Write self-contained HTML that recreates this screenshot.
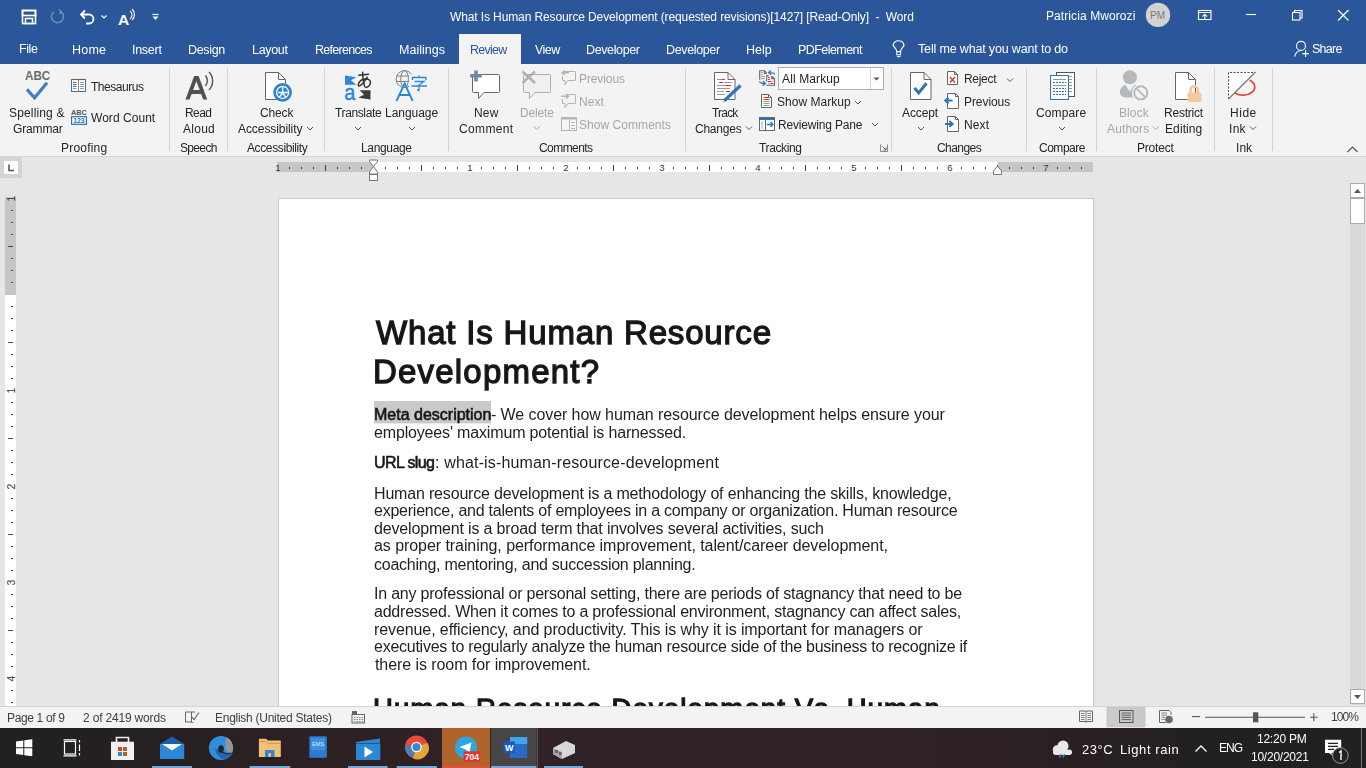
<!DOCTYPE html>
<html><head><meta charset="utf-8">
<style>
*{margin:0;padding:0;box-sizing:border-box}
html,body{width:1366px;height:768px;overflow:hidden;font-family:"Liberation Sans",sans-serif;background:#e6e6e6;position:relative}
.a{position:absolute}
.tx{position:absolute;z-index:4;will-change:transform;white-space:pre;font-family:"Liberation Sans",sans-serif}
svg{position:absolute;overflow:visible}
#title{left:0;top:0;width:1366px;height:64px;background:#2b579a}
#acttab{left:459px;top:34px;width:62px;height:30px;background:#f3f3f3}
#ribbon{left:0;top:64px;width:1366px;height:93px;background:#f3f3f3;border-bottom:1px solid #d5d5d5}
.sep{position:absolute;top:68px;width:1px;height:83px;background:#d2d2d2}
#doc{left:0;top:157px;width:1366px;height:550px;background:#e6e6e6;overflow:hidden}
#page{left:278px;top:198px;width:816px;height:600px;background:#fff;border:1px solid #c8c8c8}
#status{left:0;top:706px;width:1366px;height:22px;background:#f3f3f3;border-top:1px solid #d4d4d4}
#taskbar{left:0;top:728px;width:1366px;height:40px;background:linear-gradient(90deg,#222020 0px,#252021 150px,#2e2124 350px,#302226 600px,#302226 900px,#2a2022 1050px,#232021 1200px,#222020 1366px)}
</style></head><body>
<div id="title" class="a"></div>
<div id="acttab" class="a"></div>
<div id="ribbon" class="a"></div>
<div class="sep" style="left:169px"></div>
<div class="sep" style="left:227px"></div>
<div class="sep" style="left:324px"></div>
<div class="sep" style="left:448px"></div>
<div class="sep" style="left:685px"></div>
<div class="sep" style="left:891px"></div>
<div class="sep" style="left:1026px"></div>
<div class="sep" style="left:1096px"></div>
<div class="sep" style="left:1214px"></div>
<div class="sep" style="left:1272px"></div>
<div id="doc" class="a">
</div>
<div id="page" class="a"></div>
<svg style="left:0;top:0;z-index:2" width="1366" height="768" viewBox="0 0 1366 768"><rect x="0" y="157" width="22" height="21" fill="#d4d4d4"/><rect x="4" y="161" width="14" height="13" fill="#fff"/><path d="M9 164.5V170.5H14" fill="none" stroke="#555" stroke-width="1.6"/><rect x="277" y="162" width="816" height="10" fill="#fff"/><rect x="277" y="162" width="97" height="10" fill="#c6c6c6"/><rect x="998" y="162" width="95" height="10" fill="#c6c6c6"/><text x="278" y="171" font-family="Liberation Sans" font-size="9.5" fill="#333" text-anchor="middle">1</text><rect x="289" y="167" width="1" height="2" fill="#444"/><rect x="301" y="167" width="1" height="2" fill="#444"/><rect x="313" y="167" width="1" height="2" fill="#444"/><rect x="325" y="165" width="1" height="6" fill="#444"/><rect x="337" y="167" width="1" height="2" fill="#444"/><rect x="349" y="167" width="1" height="2" fill="#444"/><rect x="361" y="167" width="1" height="2" fill="#444"/><rect x="385" y="167" width="1" height="2" fill="#444"/><rect x="397" y="167" width="1" height="2" fill="#444"/><rect x="409" y="167" width="1" height="2" fill="#444"/><rect x="421" y="165" width="1" height="6" fill="#444"/><rect x="433" y="167" width="1" height="2" fill="#444"/><rect x="445" y="167" width="1" height="2" fill="#444"/><rect x="457" y="167" width="1" height="2" fill="#444"/><text x="470" y="171" font-family="Liberation Sans" font-size="9.5" fill="#333" text-anchor="middle">1</text><rect x="481" y="167" width="1" height="2" fill="#444"/><rect x="493" y="167" width="1" height="2" fill="#444"/><rect x="505" y="167" width="1" height="2" fill="#444"/><rect x="517" y="165" width="1" height="6" fill="#444"/><rect x="529" y="167" width="1" height="2" fill="#444"/><rect x="541" y="167" width="1" height="2" fill="#444"/><rect x="553" y="167" width="1" height="2" fill="#444"/><text x="566" y="171" font-family="Liberation Sans" font-size="9.5" fill="#333" text-anchor="middle">2</text><rect x="577" y="167" width="1" height="2" fill="#444"/><rect x="589" y="167" width="1" height="2" fill="#444"/><rect x="601" y="167" width="1" height="2" fill="#444"/><rect x="613" y="165" width="1" height="6" fill="#444"/><rect x="625" y="167" width="1" height="2" fill="#444"/><rect x="637" y="167" width="1" height="2" fill="#444"/><rect x="649" y="167" width="1" height="2" fill="#444"/><text x="662" y="171" font-family="Liberation Sans" font-size="9.5" fill="#333" text-anchor="middle">3</text><rect x="673" y="167" width="1" height="2" fill="#444"/><rect x="685" y="167" width="1" height="2" fill="#444"/><rect x="697" y="167" width="1" height="2" fill="#444"/><rect x="709" y="165" width="1" height="6" fill="#444"/><rect x="721" y="167" width="1" height="2" fill="#444"/><rect x="733" y="167" width="1" height="2" fill="#444"/><rect x="745" y="167" width="1" height="2" fill="#444"/><text x="758" y="171" font-family="Liberation Sans" font-size="9.5" fill="#333" text-anchor="middle">4</text><rect x="769" y="167" width="1" height="2" fill="#444"/><rect x="781" y="167" width="1" height="2" fill="#444"/><rect x="793" y="167" width="1" height="2" fill="#444"/><rect x="805" y="165" width="1" height="6" fill="#444"/><rect x="817" y="167" width="1" height="2" fill="#444"/><rect x="829" y="167" width="1" height="2" fill="#444"/><rect x="841" y="167" width="1" height="2" fill="#444"/><text x="854" y="171" font-family="Liberation Sans" font-size="9.5" fill="#333" text-anchor="middle">5</text><rect x="865" y="167" width="1" height="2" fill="#444"/><rect x="877" y="167" width="1" height="2" fill="#444"/><rect x="889" y="167" width="1" height="2" fill="#444"/><rect x="901" y="165" width="1" height="6" fill="#444"/><rect x="913" y="167" width="1" height="2" fill="#444"/><rect x="925" y="167" width="1" height="2" fill="#444"/><rect x="937" y="167" width="1" height="2" fill="#444"/><text x="950" y="171" font-family="Liberation Sans" font-size="9.5" fill="#333" text-anchor="middle">6</text><rect x="961" y="167" width="1" height="2" fill="#444"/><rect x="973" y="167" width="1" height="2" fill="#444"/><rect x="985" y="167" width="1" height="2" fill="#444"/><rect x="997" y="165" width="1" height="6" fill="#444"/><rect x="1009" y="167" width="1" height="2" fill="#444"/><rect x="1021" y="167" width="1" height="2" fill="#444"/><rect x="1033" y="167" width="1" height="2" fill="#444"/><text x="1046" y="171" font-family="Liberation Sans" font-size="9.5" fill="#333" text-anchor="middle">7</text><rect x="1057" y="167" width="1" height="2" fill="#444"/><rect x="1069" y="167" width="1" height="2" fill="#444"/><rect x="1081" y="167" width="1" height="2" fill="#444"/><path d="M369.5 160H377.5V161.5L373.5 166.5L369.5 161.5Z" fill="#fff" stroke="#777" stroke-width="1"/><path d="M373.5 166.5L377.5 172V174H369.5V172Z" fill="#fff" stroke="#777" stroke-width="1"/><rect x="369.5" y="174.5" width="8" height="6" fill="#fff" stroke="#777" stroke-width="1"/><path d="M997.5 166L1001.5 171V174.5H993.5V171Z" fill="#fff" stroke="#777" stroke-width="1"/><rect x="5" y="197" width="11" height="509" fill="#fff"/><rect x="5" y="197" width="11" height="98" fill="#c6c6c6"/><text x="0" y="0" font-family="Liberation Sans" font-size="10.5" fill="#333" text-anchor="middle" transform="translate(15 198.5) rotate(-90)">1</text><rect x="11" y="210" width="2" height="1" fill="#444"/><rect x="11" y="222" width="2" height="1" fill="#444"/><rect x="11" y="234" width="2" height="1" fill="#444"/><rect x="8" y="246" width="5" height="1" fill="#444"/><rect x="11" y="258" width="2" height="1" fill="#444"/><rect x="11" y="270" width="2" height="1" fill="#444"/><rect x="11" y="282" width="2" height="1" fill="#444"/><rect x="11" y="306" width="2" height="1" fill="#444"/><rect x="11" y="318" width="2" height="1" fill="#444"/><rect x="11" y="330" width="2" height="1" fill="#444"/><rect x="8" y="342" width="5" height="1" fill="#444"/><rect x="11" y="354" width="2" height="1" fill="#444"/><rect x="11" y="366" width="2" height="1" fill="#444"/><rect x="11" y="378" width="2" height="1" fill="#444"/><text x="0" y="0" font-family="Liberation Sans" font-size="10.5" fill="#333" text-anchor="middle" transform="translate(15 390.5) rotate(-90)">1</text><rect x="11" y="402" width="2" height="1" fill="#444"/><rect x="11" y="414" width="2" height="1" fill="#444"/><rect x="11" y="426" width="2" height="1" fill="#444"/><rect x="8" y="438" width="5" height="1" fill="#444"/><rect x="11" y="450" width="2" height="1" fill="#444"/><rect x="11" y="462" width="2" height="1" fill="#444"/><rect x="11" y="474" width="2" height="1" fill="#444"/><text x="0" y="0" font-family="Liberation Sans" font-size="10.5" fill="#333" text-anchor="middle" transform="translate(15 486.5) rotate(-90)">2</text><rect x="11" y="498" width="2" height="1" fill="#444"/><rect x="11" y="510" width="2" height="1" fill="#444"/><rect x="11" y="522" width="2" height="1" fill="#444"/><rect x="8" y="534" width="5" height="1" fill="#444"/><rect x="11" y="546" width="2" height="1" fill="#444"/><rect x="11" y="558" width="2" height="1" fill="#444"/><rect x="11" y="570" width="2" height="1" fill="#444"/><text x="0" y="0" font-family="Liberation Sans" font-size="10.5" fill="#333" text-anchor="middle" transform="translate(15 582.5) rotate(-90)">3</text><rect x="11" y="594" width="2" height="1" fill="#444"/><rect x="11" y="606" width="2" height="1" fill="#444"/><rect x="11" y="618" width="2" height="1" fill="#444"/><rect x="8" y="630" width="5" height="1" fill="#444"/><rect x="11" y="642" width="2" height="1" fill="#444"/><rect x="11" y="654" width="2" height="1" fill="#444"/><rect x="11" y="666" width="2" height="1" fill="#444"/><text x="0" y="0" font-family="Liberation Sans" font-size="10.5" fill="#333" text-anchor="middle" transform="translate(15 678.5) rotate(-90)">4</text><rect x="11" y="690" width="2" height="1" fill="#444"/><rect x="11" y="702" width="2" height="1" fill="#444"/><rect x="1350" y="183" width="15" height="522" fill="#d9d9d9"/><rect x="1350.5" y="183.5" width="14" height="14" fill="#fff" stroke="#acacac"/><path d="M1354 193H1361L1357.5 189Z" fill="#555"/><rect x="1350.5" y="198.5" width="14" height="25" fill="#fff" stroke="#acacac"/><rect x="1350.5" y="689.5" width="14" height="14" fill="#fff" stroke="#acacac"/><path d="M1354 695H1361L1357.5 699Z" fill="#555"/><rect x="374" y="401" width="117" height="22.4" fill="#c9c9c9"/><path d="M185.5 712V722H191.5L192.5 723L193.5 722" fill="none" stroke="#666" stroke-width="1"/><path d="M185.5 712H191.5V722M191.5 712H195" fill="none" stroke="#666" stroke-width="1"/><path d="M192 717L194 719.5L199 712.5" fill="none" stroke="#666" stroke-width="1.1"/><rect x="352" y="714.5" width="12.5" height="8.5" fill="none" stroke="#666" stroke-width="1"/><rect x="352" y="711" width="5" height="4" fill="#666"/><path d="M354 717.5H363M354 719.5H363M354 721.5H363" stroke="#888" stroke-dasharray="1.5 1"/><path d="M1079.5 711V721.5H1085.5L1086 722.5L1086.5 721.5H1092.5V711H1086.5L1086 712L1085.5 711Z" fill="none" stroke="#666" stroke-width="1"/><path d="M1086 712V721.5M1081 713.5H1084.5M1081 715.5H1084.5M1081 717.5H1084.5M1081 719.5H1084.5M1087.5 713.5H1091M1087.5 715.5H1091M1087.5 717.5H1091M1087.5 719.5H1091" stroke="#777" stroke-width="0.9"/><rect x="1106.5" y="706.7" width="39" height="20.6" fill="#c9c9c9"/><rect x="1119.5" y="710.5" width="13.5" height="12" fill="none" stroke="#555" stroke-width="1"/><path d="M1121.5 713H1131M1121.5 715.2H1131M1121.5 717.4H1131M1121.5 719.6H1131" stroke="#555" stroke-width="0.9"/><path d="M1166 722.5H1159.5V710.5H1169L1171 712.5V715" fill="none" stroke="#666" stroke-width="1"/><path d="M1161.5 713H1167M1161.5 715.2H1167M1161.5 717.4H1165M1161.5 719.6H1165" stroke="#777" stroke-width="0.9"/><circle cx="1169" cy="719.5" r="3.8" fill="#6a6a6a"/><path d="M1192 716.6H1200" stroke="#555" stroke-width="1.1"/><path d="M1205 717.3H1305" stroke="#555" stroke-width="1.1"/><rect x="1253" y="712.3" width="5.3" height="10" fill="#555"/><path d="M1310 717.3H1317.6M1313.8 713.3V721.3" stroke="#555" stroke-width="1.1"/><rect x="442" y="728" width="48" height="40" fill="#b0632b"/><rect x="491" y="728" width="45.5" height="40" fill="#484546"/><rect x="537" y="728" width="1" height="40" fill="#5a5a5a"/><rect x="152" y="766" width="40" height="2" fill="#7aa5d8"/><rect x="249.6" y="766" width="40.70000000000002" height="2" fill="#7aa5d8"/><rect x="348" y="766" width="39.60000000000002" height="2" fill="#7aa5d8"/><rect x="396.7" y="766" width="40.30000000000001" height="2" fill="#7aa5d8"/><rect x="442" y="766" width="47.69999999999999" height="2" fill="#e0503a"/><rect x="491" y="766" width="45.39999999999998" height="2" fill="#7aa5d8"/><rect x="544" y="766" width="39" height="2" fill="#7aa5d8"/><path d="M16 741.5L23.3 740.5V747.3H16ZM24.3 740.3L32.3 739.3V747.3H24.3ZM16 748.3H23.3V755.1L16 754.1ZM24.3 748.3H32.3V756.3L24.3 755.2Z" fill="#fff"/><rect x="64.5" y="741.5" width="11" height="12.5" fill="none" stroke="#fff" stroke-width="1.2"/><path d="M63.5 739.8H76.5M63.5 755.8H76.5M79.5 740V742.5M79.5 744.5V751M79.5 753V755.5" stroke="#fff" stroke-width="1.2"/><path d="M116.5 742V737.5H128.5V742" fill="none" stroke="#f0f0f0" stroke-width="1.6"/><rect x="111" y="741.7" width="23" height="18.3" fill="#f0f0f0"/><rect x="118" y="747" width="4" height="4" fill="#e23a2a"/><rect x="123" y="747" width="4" height="4" fill="#b06020"/><rect x="118" y="752" width="4" height="4" fill="#2b88d8"/><rect x="123" y="752" width="4" height="4" fill="#b06020"/><path d="M160 744L172 736.6L184.2 744Z" fill="#1c5fad"/><rect x="160" y="744" width="24.2" height="15" fill="#2b88d8"/><path d="M162 744H182L172 750.5Z" fill="#f5f5f5"/><circle cx="221" cy="748" r="12.1" fill="#2f8fdc"/><path d="M226.5 737.2A12.1 12.1 0 0 1 231.8 753.2Q226.5 752.5 225.2 748Q224.8 742 226.5 737.2Z" fill="#8f969c"/><path d="M215 748.5Q216 757 223.5 759Q229.5 759.5 231.8 753.5Q226 755.5 222 752.5Q218.5 749 215 748.5Z" fill="#2a62b0"/><ellipse cx="221" cy="749" rx="2.8" ry="3.8" fill="#242021"/><path d="M222.5 752.3Q226.5 754.8 231.5 753" fill="none" stroke="#242021" stroke-width="1.2"/><path d="M258.9 741.5V738.8H266L268 740.5H280.8V757H258.9Z" fill="#f2c07a"/><path d="M258.9 741.5H266L268 743.5H280.8" fill="none" stroke="#d39a4a" stroke-width="1"/><path d="M265 757V750H274.5V757H271V753H268.5V757Z" fill="#2b88d8"/><rect x="309.3" y="736.2" width="17.5" height="21.6" rx="1" fill="#2b7bd0"/><rect x="311" y="738" width="14" height="12" fill="#3d8fe0"/><text x="318" y="746" font-family="Liberation Sans" font-size="5.5" fill="#dfe9f5" text-anchor="middle">EMS</text><path d="M356 742L380 738.5V743H356Z" fill="#2b88d8"/><rect x="356" y="743.5" width="24.3" height="16.5" fill="#2b88d8"/><path d="M364.5 746.5V757.5L373 752Z" fill="#fff"/><circle cx="416.5" cy="747" r="11.5" fill="#e8493a"/><path d="M416.5 747L405.3 744.5A11.5 11.5 0 0 0 413 758Z" fill="#4f7fb0"/><path d="M416.5 747L413 758.5A11.5 11.5 0 0 0 427.8 743Z" fill="#e5a33a"/><circle cx="416.5" cy="747" r="5.3" fill="#fff"/><circle cx="416.5" cy="747" r="4" fill="#3a86d8"/><circle cx="466" cy="747.6" r="11" fill="#2ea6df"/><path d="M459.5 747L471.5 742.5L469.5 752.5L465.5 749.5Z" fill="#fff"/><rect x="463.6" y="751.4" width="16.6" height="10.5" fill="#e8322e"/><text x="471.9" y="760.3" font-family="Liberation Sans" font-weight="bold" font-size="8.5" fill="#fff" text-anchor="middle" textLength="14.5" lengthAdjust="spacingAndGlyphs">704</text><rect x="510" y="737" width="17.2" height="21" fill="#2a6ac9"/><rect x="510" y="737" width="17.2" height="7" fill="#41a5ee"/><rect x="503.4" y="741.5" width="11.5" height="11.5" fill="#185abd"/><text x="509.2" y="751" font-family="Liberation Sans" font-weight="bold" font-size="9" fill="#fff" text-anchor="middle">W</text><path d="M553 748L566 741L575 745V753L562 759L553 754Z" fill="#d8d8d8"/><path d="M553 748L562 752V759L553 754Z" fill="#a8a8a8"/><rect x="555" y="750" width="3" height="3" fill="#666"/><rect x="559" y="752" width="2.5" height="3" fill="#666"/><circle cx="1063" cy="746" r="5.5" fill="#e8e8e8"/><circle cx="1057" cy="749.5" r="4.2" fill="#e8e8e8"/><rect x="1053" y="749.5" width="19" height="5.5" rx="2.7" fill="#e8e8e8"/><path d="M1061 754L1059.5 757.5M1064.5 754L1063 757.5" stroke="#3a8ee0" stroke-width="1.4"/><path d="M1195.5 751.5L1201 746L1206.5 751.5" fill="none" stroke="#fff" stroke-width="1.3"/><path d="M1325 739.7H1341.2V753H1331L1334 756.5L1329 753H1325Z" fill="#fff"/><path d="M1328 743.4H1338M1328 746.4H1338M1328 749.4H1334" stroke="#222" stroke-width="1.1"/><circle cx="1340.4" cy="755.5" r="7.8" fill="#262223" stroke="#999" stroke-width="1"/><path d="M1339 752.5L1341 751V760" fill="none" stroke="#fff" stroke-width="1.4"/><rect x="1361" y="728" width="1" height="40" fill="#777"/></svg>
<div id="status" class="a"></div>
<div id="taskbar" class="a"></div>
<svg style="left:0;top:0;z-index:3" width="1366" height="768" viewBox="0 0 1366 768"><rect x="22.5" y="10.5" width="13" height="13" fill="none" stroke="#fff" stroke-width="1.6"/><rect x="22.5" y="10.5" width="13" height="5" fill="none" stroke="#fff" stroke-width="1.6"/><rect x="25.5" y="18.5" width="7" height="5" fill="none" stroke="#fff" stroke-width="1.5"/><path d="M60.5 11.5A6 6 0 1 1 54 11.8" fill="none" stroke="#7fa0c0" stroke-width="1.6" opacity="0.75"/><path d="M59 9.5L61.5 11.5L59.5 14" fill="none" stroke="#7fa0c0" stroke-width="1.4" opacity="0.75"/><path d="M81.5 14.5H89A4.5 4.5 0 0 1 89 23.5H86" fill="none" stroke="#fff" stroke-width="1.8"/><path d="M85 10.5L81 14.5L85 18.5" fill="none" stroke="#fff" stroke-width="1.8"/><path d="M101.5 15.5L104 18L106.5 15.5" fill="none" stroke="#fff" stroke-width="1.1"/><text x="118" y="24.8" font-family="Liberation Sans" font-weight="bold" font-size="15.5" fill="#fff">A</text><path d="M130 11A5 5 0 0 1 130 19" fill="none" stroke="#fff" stroke-width="1.1"/><path d="M132.2 9A8 8 0 0 1 132.2 20" fill="none" stroke="#fff" stroke-width="1.1"/><path d="M152.5 14.5H158.5" stroke="#fff" stroke-width="1.2"/><path d="M152.5 16.5H158.5L155.5 20Z" fill="#fff"/><circle cx="1158" cy="14.9" r="12.2" fill="#d2d2d2"/><text x="1150" y="18.6" font-family="Liberation Sans" font-size="10.5" fill="#7a7a7a" textLength="15" lengthAdjust="spacingAndGlyphs">PM</text><rect x="1198.5" y="10.5" width="12.5" height="9" fill="none" stroke="#fff" stroke-width="1.1"/><path d="M1198.5 12.5H1211" stroke="#fff" stroke-width="1"/><path d="M1204.75 19V14.5M1202.5 16.5L1204.75 14.2L1207 16.5" fill="none" stroke="#fff" stroke-width="1.1"/><path d="M1246 14.5H1256" stroke="#fff" stroke-width="1.1"/><rect x="1292.5" y="12.5" width="7.5" height="7.5" fill="none" stroke="#fff" stroke-width="1.1"/><path d="M1294.5 12.5V10.5H1302V18H1300" fill="none" stroke="#fff" stroke-width="1.1"/><path d="M1338 10L1348.5 20.5M1348.5 10L1338 20.5" stroke="#fff" stroke-width="1.2"/><path d="M896.8 51.5C896.5 48.5 893.2 46.5 893.2 45.2A5.5 5.5 0 0 1 904 45.2C904 46.5 900.8 48.5 900.5 51.5Z" fill="none" stroke="#fff" stroke-width="1.2"/><rect x="896.8" y="51.8" width="3.8" height="3" fill="none" stroke="#fff" stroke-width="1"/><path d="M897 56.6H900.5" stroke="#fff" stroke-width="1.1"/><circle cx="1301" cy="45.9" r="4.5" fill="none" stroke="#fff" stroke-width="1.1"/><path d="M1294.6 56.6C1295.5 52.5 1298 50.8 1300.5 50.5" fill="none" stroke="#fff" stroke-width="1.1"/><path d="M1305.6 50.2V57M1302.2 53.6H1309" stroke="#fff" stroke-width="1.1"/><text x="25" y="79.8" font-family="Liberation Sans" font-weight="bold" font-size="12.3" fill="#6b6b6b" textLength="25.2" lengthAdjust="spacingAndGlyphs">ABC</text><path d="M28 90.5L34.6 97.8L46 84" fill="none" stroke="#3d80c4" stroke-width="3.2" stroke-linecap="square"/><rect x="71.5" y="79.5" width="14" height="12" fill="#fff" stroke="#3a74b0" stroke-width="1"/><path d="M71.5 79.5H85.5" stroke="#666" stroke-width="1.2"/><path d="M78.5 79.5V91.5" stroke="#888" stroke-width="1"/><path d="M73 82.5H76.5" stroke="#e03c2c"/><path d="M73 84.5H76.5M73 86.5H76.5" stroke="#3a74b0"/><path d="M73 88.5H76.5M80 82.5H84M80 84.5H84M80 86.5H84M80 88.5H84" stroke="#999"/><text x="71" y="114.9" font-family="Liberation Sans" font-weight="bold" font-size="8" fill="#555" textLength="15.8" lengthAdjust="spacingAndGlyphs">ABC</text><rect x="71.6" y="116.7" width="14.8" height="7.6" fill="#fff" stroke="#2f6fb0" stroke-width="1.2"/><text x="73.2" y="123" font-family="Liberation Sans" font-weight="bold" font-size="7" fill="#2f6fb0" textLength="11.5" lengthAdjust="spacingAndGlyphs">123</text><path d="M185.5 99.6L194.2 76H198.6L207.2 99.6H203.2L201.2 94.1H191.6L189.5 99.6ZM196.4 81.3L193.1 90.1H199.7Z" fill="#505050" fill-rule="evenodd"/><path d="M205.5 75.5A9 9 0 0 1 205.5 86" fill="none" stroke="#555" stroke-width="1.4"/><path d="M209 72A13 13 0 0 1 209 90" fill="none" stroke="#555" stroke-width="1.4"/><path d="M265.5 72.5H278.5L285.5 79.5V99.5H265.5Z" fill="#fff" stroke="#666" stroke-width="1"/><path d="M278.5 72.5V79.5H285.5" fill="none" stroke="#666" stroke-width="1"/><circle cx="282.6" cy="92.4" r="9.3" fill="#2f80d0"/><g stroke="#fff" stroke-width="1.3" fill="none"><circle cx="282.6" cy="92.4" r="6"/><path d="M282.6 86.5V93M278 92.5H288M282.6 93L279 97.5M282.6 93L286 97.5"/></g><path d="M345 75.4L356.2 77.2L351 80.2L356.2 84.8H345Z" fill="#2b88d8"/><text x="344.2" y="99.6" font-family="Liberation Sans" font-size="22.5" fill="#2b88d8" stroke="#2b88d8" stroke-width="0.5" textLength="11" lengthAdjust="spacingAndGlyphs">a</text><g fill="none" stroke="#333" stroke-width="1.5" stroke-linecap="round"><path d="M358.8 75.3L368.5 74.3"/><path d="M362.6 72.3Q362.6 80 364.6 86.5"/><path d="M367.2 77.2Q363.5 83.5 360.2 85.6Q357.6 87 358.6 83.4Q360.6 79 365.6 79Q370.8 79 370.4 83Q370 86.6 365.8 87.4"/></g><path d="M370.5 99.6L358.5 97.8L364 94.5L359.5 90.2H370.5Z" fill="#3a3d3a"/><g fill="none" stroke="#808080" stroke-width="1"><circle cx="404.6" cy="79.1" r="8.5"/><ellipse cx="404.6" cy="79.1" rx="3.8" ry="8.5"/><path d="M396.5 76H412.5M396.5 81.5H412.5"/></g><rect x="409" y="74" width="19" height="18" fill="#f3f3f3"/><path d="M396.5 101L404.6 83.5L412.7 101M399.3 95H410" fill="none" stroke="#2b88d8" stroke-width="1.9"/><g fill="none" stroke="#2b88d8" stroke-width="1.3"><path d="M419 75.5V77.5M412.5 80V77.5H426V80M414.5 81.5H424L419 85V90.5L417 90M411.5 86H427"/></g><path d="M473.5 74.5H498.5Q499.5 74.5 499.5 75.5V91.5Q499.5 92.5 498.5 92.5H484L478.5 98.5V92.5H473.5Q472.5 92.5 472.5 91.5V75.5Q472.5 74.5 473.5 74.5Z" fill="#fff" stroke="#666" stroke-width="1"/><path d="M476 70.5V81.5M470.2 75.8H481.8" stroke="#6f87a3" stroke-width="3.6"/><path d="M524.5 74.5H549.5Q550.5 74.5 550.5 75.5V91.5Q550.5 92.5 549.5 92.5H535L529.5 98.5V92.5H524.5Q523.5 92.5 523.5 91.5V75.5Q523.5 74.5 524.5 74.5Z" fill="#f0f0f0" stroke="#adadad" stroke-width="1"/><path d="M522.5 71.5L535 83M522.5 83L535 71.5" stroke="#b0b0b0" stroke-width="2.4"/><path d="M563.5 71.5H575Q575.5 71.5 575.5 72V80Q575.5 80.5 575 80.5H568L565 84.5V80.5H563Q562.5 80.5 562.5 80V76" fill="#f3f3f3" stroke="#b4b4b4" stroke-width="1"/><path d="M569 72.8H562M564.5 70.5L562 72.8L564.5 75" fill="none" stroke="#b4b4b4" stroke-width="1.4"/><path d="M565.5 94.5H575Q575.5 94.5 575.5 95V103Q575.5 103.5 575 103.5H568L565 107.5V103.5H563Q562.5 103.5 562.5 103V99" fill="#f3f3f3" stroke="#b4b4b4" stroke-width="1"/><path d="M561.5 96.3H568.5M566 94L568.5 96.3L566 98.6" fill="none" stroke="#b4b4b4" stroke-width="1.4"/><rect x="561.5" y="117.5" width="15" height="13" fill="#f6f6f6" stroke="#b4b4b4" stroke-width="1"/><rect x="561.5" y="117.5" width="15" height="2" fill="#b4b4b4"/><path d="M569.5 120V130.5M571 122.5H575M571 125.5H575M571 128.5H575" stroke="#b4b4b4" stroke-width="1"/><path d="M714.5 72.5H728L735 79.5V99.5H714.5Z" fill="#fff" stroke="#666" stroke-width="1"/><path d="M728 72.5V79.5H735" fill="none" stroke="#666" stroke-width="1"/><g stroke-width="1"><path d="M717 79.5H722M717 85.5H726M717 88.5H730M717 91.5H724M717 94.5H725M724 82.5H732" stroke="#999"/><path d="M722 79.5H725M719 82.5H723M726 85.5H731M726 91.5H730" stroke="#e03020"/></g><path d="M724.5 100.5L740.5 85.5" stroke="#2e75b6" stroke-width="3.2"/><path d="M723 102L725.5 98.5L727 100.5Z" fill="#2e75b6"/><path d="M759.7 79.7V70.7H764.5L766.2 72.5V73.8" fill="none" stroke="#666" stroke-width="1.1"/><path d="M764.5 70.7V73.5H766.5" fill="none" stroke="#666" stroke-width="1.1"/><path d="M761 72.6H763M761 74.6H763M761 76.6H765M761 78.6H765" stroke="#999" stroke-width="0.9"/><path d="M766.7 81.6V75.6H768.6M766.4 85.3H774.5V78.8L772 76.3H771.8V78.8H774.5" fill="none" stroke="#666" stroke-width="1.1"/><path d="M768 77.3H770M768 79.4H770M768 81.5H771M771 83.5H773" stroke="#e03020" stroke-width="1"/><path d="M771 81.5H773M768 83.5H771" stroke="#aaa" stroke-width="0.9"/><path d="M774.6 74.5Q774 72.6 769 72.6M771 70.5L768.6 72.6L771 74.8" fill="none" stroke="#2e7dc6" stroke-width="1.4"/><path d="M759.7 81.2Q759.8 83.5 765 83.5M762.8 81.3L765.3 83.5L762.8 85.7" fill="none" stroke="#2e7dc6" stroke-width="1.4"/><rect x="778.5" y="67.5" width="105" height="22" fill="#fff" stroke="#adadad" stroke-width="1"/><path d="M870.5 68V89" stroke="#d8d8d8"/><path d="M873.5 77.5H879.5L876.5 80.5Z" fill="#555"/><path d="M761.5 94.5H768.5L771.5 97.5V107.5H761.5Z" fill="#fff" stroke="#666" stroke-width="1"/><path d="M768.5 94.5V97.5H771.5" fill="none" stroke="#666" stroke-width="1"/><path d="M763.5 97.5H768M763.5 99.5H769.5" stroke="#e03020"/><path d="M763.5 101.5H769.5M763.5 103.5H769.5M763.5 105.5H769.5" stroke="#999"/><path d="M855 101L858 104L861 101" fill="none" stroke="#555" stroke-width="1"/><rect x="759.5" y="117.5" width="15" height="13" fill="#fff" stroke="#666" stroke-width="1"/><rect x="759.5" y="117.5" width="15" height="2.5" fill="#2e75b6"/><path d="M765.5 120V130.5" stroke="#666"/><path d="M762 121.5V129" stroke="#aaa"/><path d="M767 124.5H773M770.5 122L773 124.5L770.5 127" fill="none" stroke="#2e75b6" stroke-width="1.3"/><path d="M872 123L875 126L878 123" fill="none" stroke="#555" stroke-width="1"/><path d="M880.5 144.5V151.5H887.5V144.5" fill="none" stroke="#888" stroke-width="1"/><path d="M882.5 146.5L886 150M886 147.5V150H883.5" fill="none" stroke="#666" stroke-width="1"/><path d="M910.5 72.5H924L931 79.5V99.5H910.5Z" fill="#fff" stroke="#666" stroke-width="1"/><path d="M924 72.5V79.5H931" fill="none" stroke="#666" stroke-width="1"/><path d="M914.5 88L918.7 93L926.5 83.2" fill="none" stroke="#2e75b6" stroke-width="3"/><path d="M947.5 71.5H954.5L957.5 74.5V84.5H947.5Z" fill="#fff" stroke="#666" stroke-width="1"/><path d="M954.5 71.5V74.5H957.5" fill="none" stroke="#666" stroke-width="1"/><path d="M950 77L955 82.5M955 77L950 82.5" stroke="#e03020" stroke-width="1.3"/><path d="M1007 78.5L1010 81.5L1013 78.5" fill="none" stroke="#555" stroke-width="1"/><path d="M947.5 93.5H955.5L958.5 96.5V108.5H947.5Z" fill="#fff" stroke="#666" stroke-width="1"/><path d="M955.5 93.5V96.5H958.5" fill="none" stroke="#666" stroke-width="1"/><path d="M945.5 100.6H952.5M948.5 97.8L945.3 100.6L948.5 103.4" fill="none" stroke="#2e75b6" stroke-width="2"/><path d="M947.5 116.5H955.5L958.5 119.5V131.5H947.5Z" fill="#fff" stroke="#666" stroke-width="1"/><path d="M955.5 116.5V119.5H958.5" fill="none" stroke="#666" stroke-width="1"/><path d="M945 123.9H952.5M949.3 121L952.7 123.9L949.3 126.8" fill="none" stroke="#2e75b6" stroke-width="2"/><rect x="1056.5" y="72.5" width="18" height="24" fill="#fff" stroke="#555" stroke-width="1"/><path d="M1069 76.5H1072M1069 79.5H1072M1069 82.5H1072M1069 85.5H1072M1069 88.5H1072M1069 91.5H1072" stroke="#999"/><rect x="1050.5" y="75.5" width="18" height="24" fill="#fff" stroke="#2e75b6" stroke-width="1"/><path d="M1053 79.5H1066M1053 85.5H1066" stroke="#999"/><path d="M1053 82.5H1066M1053 88.5H1066M1053 91.5H1066M1053 94.5H1066" stroke="#2e75b6" stroke-dasharray="2 1"/><circle cx="1129.9" cy="77.2" r="7" fill="#b6b9bc"/><path d="M1120 93.5Q1119 87.5 1125.2 84.6L1129.8 91.8L1134.4 84.6Q1137 85 1138 86.5V97.6H1125.5Q1121 97.2 1120 93.5Z" fill="#b6b9bc"/><circle cx="1140.8" cy="92.8" r="9" fill="#f3f3f3"/><circle cx="1140.8" cy="92.8" r="6.6" fill="#f3f3f3" stroke="#b6b9bc" stroke-width="1.9"/><path d="M1136.2 88.2L1145.4 97.4" stroke="#b6b9bc" stroke-width="1.9"/><path d="M1175.5 72.5H1188.5L1195.5 79.5V99.5H1175.5Z" fill="#fff" stroke="#666" stroke-width="1"/><path d="M1188.5 72.5V79.5H1195.5" fill="none" stroke="#666" stroke-width="1"/><path d="M1190.5 93V90A3.7 3.7 0 0 1 1197.9 90V93" fill="none" stroke="#f5c9a0" stroke-width="2.5"/><rect x="1187.5" y="92.5" width="14" height="9.5" rx="1.5" fill="#f5c9a0"/><path d="M1228.5 99V72.5H1255" fill="none" stroke="#555" stroke-width="1" stroke-dasharray="2 1.5"/><path d="M1228.5 72.5L1255 72.5L1228.5 99Z" fill="#fff"/><path d="M1228.5 99V72.5H1255" fill="none" stroke="#555" stroke-width="1" stroke-dasharray="2 1.5"/><path d="M1249.7 80.2A11.6 8.2 0 1 1 1235 92.8" fill="none" stroke="#e03c2c" stroke-width="1.6"/><path d="M1228.5 99L1255.5 72" stroke="#777" stroke-width="1.2"/><path d="M307 127.0L310 130.0L313 127.0" fill="none" stroke="#555" stroke-width="1"/><path d="M355 127.0L358 130.0L361 127.0" fill="none" stroke="#555" stroke-width="1"/><path d="M409 127.0L412 130.0L415 127.0" fill="none" stroke="#555" stroke-width="1"/><path d="M533.8 126.5L536.8 129.5L539.8 126.5" fill="none" stroke="#a6a6a6" stroke-width="1"/><path d="M746 126.5L749 129.5L752 126.5" fill="none" stroke="#555" stroke-width="1"/><path d="M918 127.0L921 130.0L924 127.0" fill="none" stroke="#555" stroke-width="1"/><path d="M1059 127.0L1062 130.0L1065 127.0" fill="none" stroke="#555" stroke-width="1"/><path d="M1152.7 126.5L1155.7 129.5L1158.7 126.5" fill="none" stroke="#a6a6a6" stroke-width="1"/><path d="M1250 126.5L1253 129.5L1256 126.5" fill="none" stroke="#555" stroke-width="1"/><path d="M1347.5 152L1352.5 147L1357.5 152" fill="none" stroke="#555" stroke-width="1.1"/></svg>
<div class="tx" style="left:450.30px;top:11.00px;font-size:12px;line-height:12px;letter-spacing:-0.116px;color:#ffffff;">What Is Human Resource Development (requested revisions)[1427] [Read-Only]  -  Word</div>
<div class="tx" style="left:1046.20px;top:10.00px;font-size:12px;line-height:12px;letter-spacing:0.087px;color:#ffffff;">Patricia Mworozi</div>
<div class="tx" style="left:19.20px;top:43.00px;font-size:12.5px;line-height:12.5px;letter-spacing:-0.400px;color:#ffffff;">File</div>
<div class="tx" style="left:72.40px;top:44.00px;font-size:12.5px;line-height:12.5px;letter-spacing:0.200px;color:#ffffff;">Home</div>
<div class="tx" style="left:132.00px;top:44.00px;font-size:12.5px;line-height:12.5px;letter-spacing:-0.280px;color:#ffffff;">Insert</div>
<div class="tx" style="left:188.20px;top:44.00px;font-size:12.5px;line-height:12.5px;letter-spacing:-0.320px;color:#ffffff;">Design</div>
<div class="tx" style="left:251.50px;top:44.00px;font-size:12.5px;line-height:12.5px;letter-spacing:-0.320px;color:#ffffff;">Layout</div>
<div class="tx" style="left:314.50px;top:44.00px;font-size:12.5px;line-height:12.5px;letter-spacing:-0.722px;color:#ffffff;">References</div>
<div class="tx" style="left:398.70px;top:44.00px;font-size:12.5px;line-height:12.5px;letter-spacing:0.014px;color:#ffffff;">Mailings</div>
<div class="tx" style="left:534.90px;top:44.00px;font-size:12.5px;line-height:12.5px;letter-spacing:-0.533px;color:#ffffff;">View</div>
<div class="tx" style="left:586.00px;top:44.00px;font-size:12.5px;line-height:12.5px;letter-spacing:-0.375px;color:#ffffff;">Developer</div>
<div class="tx" style="left:665.50px;top:44.00px;font-size:12.5px;line-height:12.5px;letter-spacing:-0.362px;color:#ffffff;">Developer</div>
<div class="tx" style="left:746.00px;top:44.00px;font-size:12.5px;line-height:12.5px;letter-spacing:0.000px;color:#ffffff;">Help</div>
<div class="tx" style="left:798.00px;top:44.00px;font-size:12.5px;line-height:12.5px;letter-spacing:-0.556px;color:#ffffff;">PDFelement</div>
<div class="tx" style="left:918.00px;top:43.00px;font-size:12.5px;line-height:12.5px;letter-spacing:-0.162px;color:#ffffff;">Tell me what you want to do</div>
<div class="tx" style="left:470.40px;top:44.00px;font-size:12.5px;line-height:12.5px;letter-spacing:-0.760px;color:#2b579a;">Review</div>
<div class="tx" style="left:1312.00px;top:43.00px;font-size:12.5px;line-height:12.5px;letter-spacing:-0.750px;color:#ffffff;">Share</div>
<div class="tx" style="left:90.60px;top:81.00px;font-size:12px;line-height:12px;letter-spacing:-0.462px;color:#262626;">Thesaurus</div>
<div class="tx" style="left:90.60px;top:112.00px;font-size:12px;line-height:12px;letter-spacing:0.044px;color:#262626;">Word Count</div>
<div class="tx" style="left:9.30px;top:107.00px;font-size:12px;line-height:12px;letter-spacing:0.156px;color:#262626;">Spelling &amp;</div>
<div class="tx" style="left:12.70px;top:123.00px;font-size:12px;line-height:12px;letter-spacing:-0.150px;color:#262626;">Grammar</div>
<div class="tx" style="left:61.00px;top:142.00px;font-size:12px;line-height:12px;letter-spacing:0.200px;color:#262626;">Proofing</div>
<div class="tx" style="left:185.40px;top:107.00px;font-size:12px;line-height:12px;letter-spacing:-0.567px;color:#262626;">Read</div>
<div class="tx" style="left:183.40px;top:123.00px;font-size:12px;line-height:12px;letter-spacing:0.275px;color:#262626;">Aloud</div>
<div class="tx" style="left:179.60px;top:142.00px;font-size:12px;line-height:12px;letter-spacing:-0.660px;color:#262626;">Speech</div>
<div class="tx" style="left:259.60px;top:107.00px;font-size:12px;line-height:12px;letter-spacing:-0.150px;color:#262626;">Check</div>
<div class="tx" style="left:238.40px;top:123.00px;font-size:12px;line-height:12px;letter-spacing:-0.075px;color:#262626;">Accessibility</div>
<div class="tx" style="left:246.50px;top:142.00px;font-size:12px;line-height:12px;letter-spacing:-0.383px;color:#262626;">Accessibility</div>
<div class="tx" style="left:335.00px;top:107.00px;font-size:12px;line-height:12px;letter-spacing:-0.375px;color:#262626;">Translate</div>
<div class="tx" style="left:385.30px;top:107.00px;font-size:12px;line-height:12px;letter-spacing:-0.043px;color:#262626;">Language</div>
<div class="tx" style="left:360.80px;top:142.00px;font-size:12px;line-height:12px;letter-spacing:-0.343px;color:#262626;">Language</div>
<div class="tx" style="left:473.60px;top:107.00px;font-size:12px;line-height:12px;letter-spacing:0.150px;color:#262626;">New</div>
<div class="tx" style="left:458.70px;top:123.00px;font-size:12px;line-height:12px;letter-spacing:0.350px;color:#262626;">Comment</div>
<div class="tx" style="left:539.40px;top:142.00px;font-size:12px;line-height:12px;letter-spacing:-0.557px;color:#262626;">Comments</div>
<div class="tx" style="left:712.20px;top:107.00px;font-size:12px;line-height:12px;letter-spacing:-0.800px;color:#262626;">Track</div>
<div class="tx" style="left:695.40px;top:123.00px;font-size:12px;line-height:12px;letter-spacing:-0.233px;color:#262626;">Changes</div>
<div class="tx" style="left:777.20px;top:96.00px;font-size:12px;line-height:12px;letter-spacing:0.020px;color:#262626;">Show Markup</div>
<div class="tx" style="left:777.50px;top:119.00px;font-size:12px;line-height:12px;letter-spacing:-0.177px;color:#262626;">Reviewing Pane</div>
<div class="tx" style="left:759.20px;top:142.00px;font-size:12px;line-height:12px;letter-spacing:-0.371px;color:#262626;">Tracking</div>
<div class="tx" style="left:902.30px;top:107.00px;font-size:12px;line-height:12px;letter-spacing:-0.100px;color:#262626;">Accept</div>
<div class="tx" style="left:963.50px;top:73.00px;font-size:12px;line-height:12px;letter-spacing:-0.300px;color:#262626;">Reject</div>
<div class="tx" style="left:963.50px;top:96.00px;font-size:12px;line-height:12px;letter-spacing:-0.071px;color:#262626;">Previous</div>
<div class="tx" style="left:963.50px;top:119.00px;font-size:12px;line-height:12px;letter-spacing:0.133px;color:#262626;">Next</div>
<div class="tx" style="left:936.70px;top:142.00px;font-size:12px;line-height:12px;letter-spacing:-0.567px;color:#262626;">Changes</div>
<div class="tx" style="left:1036.40px;top:107.00px;font-size:12px;line-height:12px;letter-spacing:0.133px;color:#262626;">Compare</div>
<div class="tx" style="left:1038.60px;top:142.00px;font-size:12px;line-height:12px;letter-spacing:-0.483px;color:#262626;">Compare</div>
<div class="tx" style="left:1164.00px;top:107.00px;font-size:12px;line-height:12px;letter-spacing:-0.214px;color:#262626;">Restrict</div>
<div class="tx" style="left:1165.40px;top:123.00px;font-size:12px;line-height:12px;letter-spacing:0.100px;color:#262626;">Editing</div>
<div class="tx" style="left:1137.00px;top:142.00px;font-size:12px;line-height:12px;letter-spacing:-0.200px;color:#262626;">Protect</div>
<div class="tx" style="left:1230.40px;top:107.00px;font-size:12px;line-height:12px;letter-spacing:0.533px;color:#262626;">Hide</div>
<div class="tx" style="left:1229.40px;top:123.00px;font-size:12px;line-height:12px;letter-spacing:0.300px;color:#262626;">Ink</div>
<div class="tx" style="left:1235.50px;top:142.00px;font-size:12px;line-height:12px;letter-spacing:0.050px;color:#262626;">Ink</div>
<div class="tx" style="left:781.50px;top:73.00px;font-size:12px;line-height:12px;letter-spacing:0.122px;color:#1e1e1e;">All Markup</div>
<div class="tx" style="left:519.70px;top:107.00px;font-size:12px;line-height:12px;letter-spacing:-0.140px;color:#a6a6a6;">Delete</div>
<div class="tx" style="left:579.40px;top:73.00px;font-size:12px;line-height:12px;letter-spacing:-0.100px;color:#a6a6a6;">Previous</div>
<div class="tx" style="left:579.40px;top:96.00px;font-size:12px;line-height:12px;letter-spacing:0.067px;color:#a6a6a6;">Next</div>
<div class="tx" style="left:579.40px;top:119.00px;font-size:12px;line-height:12px;letter-spacing:0.050px;color:#a6a6a6;">Show Comments</div>
<div class="tx" style="left:1118.90px;top:107.00px;font-size:12px;line-height:12px;letter-spacing:0.075px;color:#a6a6a6;">Block</div>
<div class="tx" style="left:1107.20px;top:123.00px;font-size:12px;line-height:12px;letter-spacing:0.133px;color:#a6a6a6;">Authors</div>
<div class="tx" style="left:7.30px;top:712.00px;font-size:12px;line-height:12px;letter-spacing:-0.350px;color:#404040;">Page 1 of 9</div>
<div class="tx" style="left:83.00px;top:712.00px;font-size:12px;line-height:12px;letter-spacing:-0.179px;color:#404040;">2 of 2419 words</div>
<div class="tx" style="left:215.40px;top:712.00px;font-size:12px;line-height:12px;letter-spacing:-0.264px;color:#404040;">English (United States)</div>
<div class="tx" style="left:1330.70px;top:711.00px;font-size:12px;line-height:12px;letter-spacing:-0.933px;color:#404040;">100%</div>
<div class="tx" style="left:1081.50px;top:743.00px;font-size:13px;line-height:13px;letter-spacing:0.533px;color:#ffffff;">23°C</div>
<div class="tx" style="left:1119.70px;top:743.00px;font-size:13px;line-height:13px;letter-spacing:0.589px;color:#ffffff;">Light rain</div>
<div class="tx" style="left:1218.50px;top:742.00px;font-size:12px;line-height:12px;letter-spacing:-0.900px;color:#ffffff;">ENG</div>
<div class="tx" style="left:1256.70px;top:733.00px;font-size:12px;line-height:12px;letter-spacing:-0.243px;color:#ffffff;">12:20 PM</div>
<div class="tx" style="left:1251.40px;top:751.00px;font-size:12px;line-height:12px;letter-spacing:-0.244px;color:#ffffff;">10/20/2021</div>
<div class="tx" style="left:375.50px;top:316.00px;font-size:33px;line-height:33px;letter-spacing:0.819px;color:#141414;-webkit-text-stroke:1.3px #1a1a1a">What Is Human Resource</div>
<div class="tx" style="left:372.50px;top:355.00px;font-size:33px;line-height:33px;letter-spacing:1.200px;color:#141414;-webkit-text-stroke:1.3px #1a1a1a">Development?</div>
<div class="tx" style="left:373.50px;top:407.00px;font-size:16px;line-height:16px;letter-spacing:0.000px;color:#141414;-webkit-text-stroke:0.6px #1a1a1a">Meta description</div>
<div class="tx" style="left:491.00px;top:407.00px;font-size:16px;line-height:16px;letter-spacing:-0.081px;color:#1f1f1f;">- We cover how human resource development helps ensure your</div>
<div class="tx" style="left:373.50px;top:425.00px;font-size:16px;line-height:16px;letter-spacing:-0.161px;color:#1f1f1f;">employees' maximum potential is harnessed.</div>
<div class="tx" style="left:373.50px;top:455.00px;font-size:16px;line-height:16px;letter-spacing:-0.600px;color:#141414;-webkit-text-stroke:0.6px #1a1a1a">URL slug</div>
<div class="tx" style="left:435.00px;top:455.00px;font-size:16px;line-height:16px;letter-spacing:0.157px;color:#1f1f1f;">: what-is-human-resource-development</div>
<div class="tx" style="left:373.50px;top:486.00px;font-size:16px;line-height:16px;letter-spacing:-0.177px;color:#1f1f1f;">Human resource development is a methodology of enhancing the skills, knowledge,</div>
<div class="tx" style="left:373.50px;top:503.00px;font-size:16px;line-height:16px;letter-spacing:-0.231px;color:#1f1f1f;">experience, and talents of employees in a company or organization. Human resource</div>
<div class="tx" style="left:373.50px;top:521.00px;font-size:16px;line-height:16px;letter-spacing:-0.165px;color:#1f1f1f;">development is a broad term that involves several activities, such</div>
<div class="tx" style="left:373.50px;top:538.00px;font-size:16px;line-height:16px;letter-spacing:-0.064px;color:#1f1f1f;">as proper training, performance improvement, talent/career development,</div>
<div class="tx" style="left:373.50px;top:557.00px;font-size:16px;line-height:16px;letter-spacing:-0.250px;color:#1f1f1f;">coaching, mentoring, and succession planning.</div>
<div class="tx" style="left:373.50px;top:586.00px;font-size:16px;line-height:16px;letter-spacing:-0.215px;color:#1f1f1f;">In any professional or personal setting, there are periods of stagnancy that need to be</div>
<div class="tx" style="left:373.50px;top:604.00px;font-size:16px;line-height:16px;letter-spacing:-0.222px;color:#1f1f1f;">addressed. When it comes to a professional environment, stagnancy can affect sales,</div>
<div class="tx" style="left:373.50px;top:622.00px;font-size:16px;line-height:16px;letter-spacing:-0.095px;color:#1f1f1f;">revenue, efficiency, and productivity. This is why it is important for managers or</div>
<div class="tx" style="left:373.50px;top:639.00px;font-size:16px;line-height:16px;letter-spacing:-0.258px;color:#1f1f1f;">executives to regularly analyze the human resource side of the business to recognize if</div>
<div class="tx" style="left:374.50px;top:657.00px;font-size:16px;line-height:16px;letter-spacing:-0.072px;color:#1f1f1f;">there is room for improvement.</div>
<div class="tx" style="left:372.50px;top:695.00px;font-size:27.5px;line-height:27.5px;letter-spacing:1.129px;color:#141414;-webkit-text-stroke:1.3px #1a1a1a;clip-path:inset(0 -20px 16.5px -20px)">Human Resource Development Vs. Human</div>
</body></html>
